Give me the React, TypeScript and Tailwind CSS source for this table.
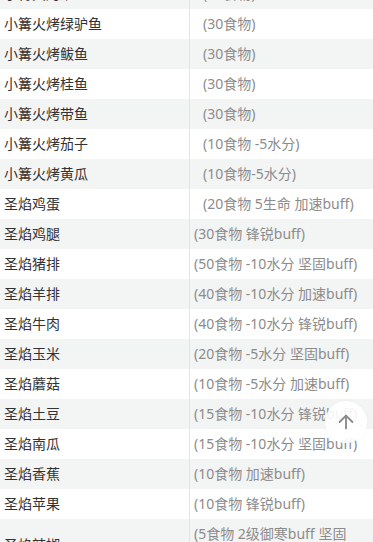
import { ArrowUp } from "lucide-react";

type Row = { name: string; effect: string; indent?: boolean };

const rows: Row[] = [
  { name: "小篝火烤鲈鱼", effect: "(30食物)", indent: true },
  { name: "小篝火烤绿驴鱼", effect: "(30食物)", indent: true },
  { name: "小篝火烤鲅鱼", effect: "(30食物)", indent: true },
  { name: "小篝火烤桂鱼", effect: "(30食物)", indent: true },
  { name: "小篝火烤带鱼", effect: "(30食物)", indent: true },
  { name: "小篝火烤茄子", effect: "(10食物 -5水分)", indent: true },
  { name: "小篝火烤黄瓜", effect: "(10食物-5水分)", indent: true },
  { name: "圣焰鸡蛋", effect: "(20食物 5生命 加速buff)", indent: true },
  { name: "圣焰鸡腿", effect: "(30食物 锋锐buff)" },
  { name: "圣焰猪排", effect: "(50食物 -10水分 坚固buff)" },
  { name: "圣焰羊排", effect: "(40食物 -10水分 加速buff)" },
  { name: "圣焰牛肉", effect: "(40食物 -10水分 锋锐buff)" },
  { name: "圣焰玉米", effect: "(20食物 -5水分 坚固buff)" },
  { name: "圣焰蘑菇", effect: "(10食物 -5水分 加速buff)" },
  { name: "圣焰土豆", effect: "(15食物 -10水分 锋锐buff)" },
  { name: "圣焰南瓜", effect: "(15食物 -10水分 坚固buff)" },
  { name: "圣焰香蕉", effect: "(10食物 加速buff)" },
  { name: "圣焰苹果", effect: "(10食物 锋锐buff)" },
  { name: "圣焰辣椒", effect: "(5食物 2级御寒buff 坚固buff)" },
];

export default function App() {
  return (
    <div className="relative h-[542px] w-[373px] overflow-hidden bg-white font-['Noto_Sans','Noto_Sans_CJK_SC',sans-serif] text-[14px] leading-[22px]">
      <div className="-mt-[21px] grid grid-cols-[190px_1fr]">
        {rows.map((r, i) => (
          <div
            key={r.name}
            className={`col-span-2 grid grid-cols-[190px_1fr] ${i % 2 === 0 ? "bg-[#f3f4f4]" : "bg-white"}`}
          >
            <div className="flex items-center border-r border-[#e3e4e6] py-1 pl-1 text-[#333]">
              {r.name}
            </div>
            <div className={`flex items-center py-1 pr-1 text-[#8c8c8c] ${r.indent ? "pl-[13px]" : "pl-1"}`}>
              {r.effect}
            </div>
          </div>
        ))}
      </div>

      {/* back to top */}
      <button className="absolute bottom-[99px] right-[6px] flex h-[42px] w-[42px] items-center justify-center rounded-full bg-white/90 text-[#888] shadow-[0_0_4px_rgba(0,0,0,0.04)]">
        <ArrowUp size={22} strokeWidth={2} />
      </button>
    </div>
  );
}
